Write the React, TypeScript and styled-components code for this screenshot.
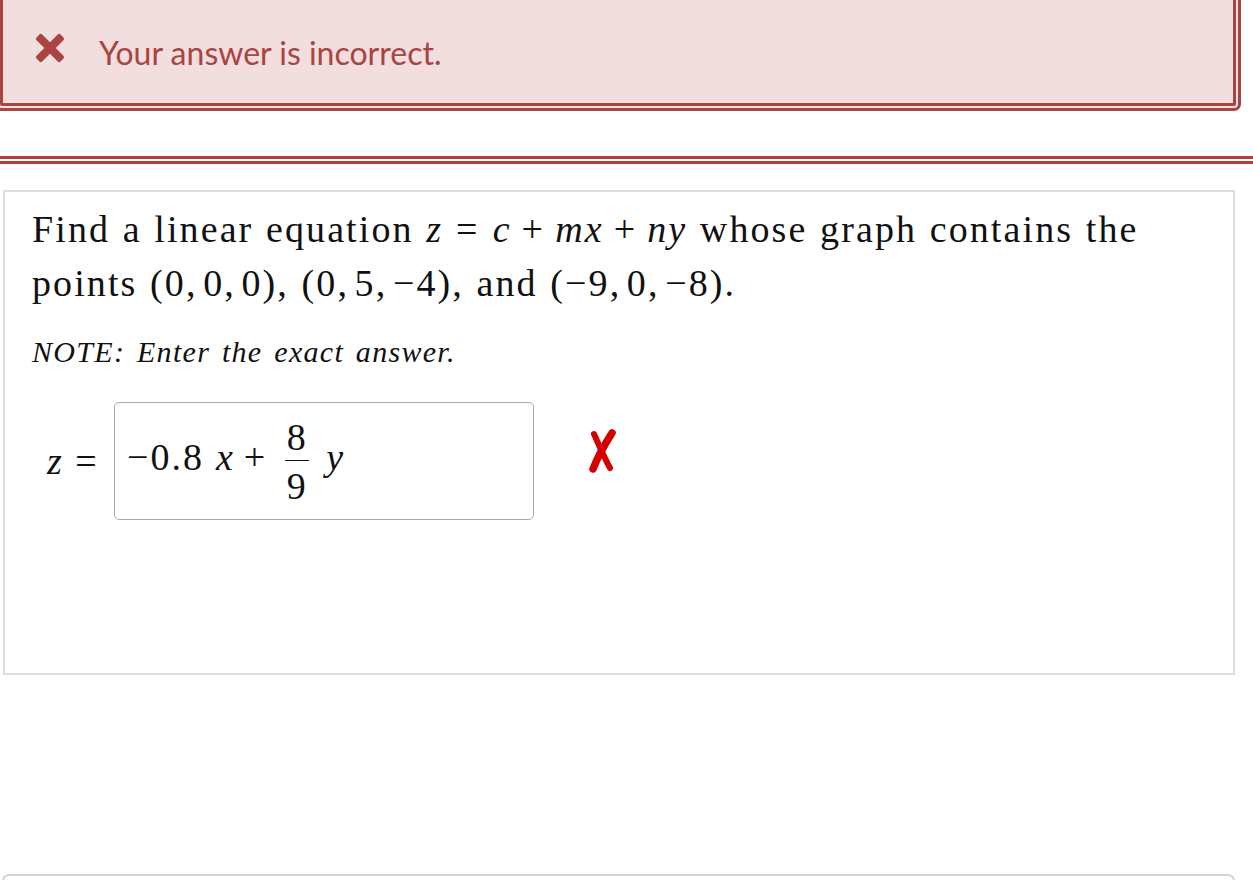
import React from "react";
import styled, { createGlobalStyle } from "styled-components";

const GlobalStyle = createGlobalStyle`
  html, body {
    margin: 0;
    padding: 0;
    background: #fff;
  }
  body {
    overflow: hidden;
  }
`;

const Page = styled.div`
  width: 1253px;
  height: 880px;
  overflow: hidden;
`;

const Alert = styled.div`
  box-sizing: border-box;
  width: 1246px;
  height: 125px;
  margin: -14px 0 0 -5px;
  padding-left: 32px;
  display: flex;
  align-items: center;
  gap: 34px;
  background: #f2dede;
  border: 8px double #a94442;
  border-radius: 7px;
  color: #a94442;
  font-family: Lato, "Open Sans", sans-serif;
  font-size: 32px;
`;

const AlertText = styled.span`
  margin-top: 8px;
`;

const IconSvg = styled.svg`
  flex: none;
  width: 30px;
  height: 30px;
  margin-top: -2px;
`;

const TimesIcon = () => (
  <IconSvg viewBox="0 0 30 30">
    <g fill="currentColor">
      <rect x="-2" y="11" width="34" height="8" rx="2" transform="rotate(45 15 15)" />
      <rect x="-2" y="11" width="34" height="8" rx="2" transform="rotate(-45 15 15)" />
    </g>
  </IconSvg>
);

const Divider = styled.div`
  margin-top: 45px;
  border-top: 8px double #a94442;
`;

const Panel = styled.section`
  box-sizing: border-box;
  width: 1232px;
  height: 485px;
  margin: 26px 0 0 3px;
  padding: 10px 27px 0;
  border: 2px solid #dedede;
  font-family: "Liberation Serif", "Times New Roman", serif;
  color: #111;
`;

const Question = styled.p`
  margin: 0;
  font-size: 38px;
  line-height: 54px;
  letter-spacing: 2.1px;
  word-spacing: 1px;
`;

const Tuple = styled.span`
  word-spacing: -6px;
`;

const Var = styled.i<{ $gap?: number }>`
  font-style: italic;
  margin-left: ${(p) => p.$gap ?? 0}px;
`;

const Op = styled.span<{ $space: number }>`
  padding: 0 ${(p) => p.$space}px;
`;

const Note = styled.p`
  margin: 22px 0 0;
  font-size: 30px;
  font-style: italic;
  line-height: 40px;
  letter-spacing: 1.3px;
  word-spacing: 3px;
`;

const AnswerRow = styled.div`
  display: flex;
  align-items: center;
  margin-top: 30px;
  font-size: 38px;
`;

const Lhs = styled.span`
  width: 82px;
  padding-left: 15px;
  box-sizing: border-box;
  word-spacing: 4px;
`;

const AnswerBox = styled.div`
  box-sizing: border-box;
  width: 420px;
  height: 118px;
  padding: 0 0 0 12px;
  display: flex;
  align-items: center;
  border: 1.5px solid #aaa;
  border-radius: 5px;
`;

const Expr = styled.span`
  white-space: nowrap;
  letter-spacing: 2px;
`;

const Frac = styled.span`
  display: inline-flex;
  flex-direction: column;
  align-items: center;
  margin: 0 17px 0 9px;
  line-height: 30px;
  vertical-align: middle;
`;

const FracBar = styled.span`
  width: 24px;
  border-top: 1.5px solid #111;
  margin: 8px 0 10px;
`;

const MarkSvg = styled.svg`
  flex: none;
  width: 32px;
  height: 44px;
  margin: -20px 0 0 52px;
`;

const WrongMark = () => (
  <MarkSvg viewBox="0 0 32 44">
    <g fill="none" stroke="#d40000" strokeLinecap="round">
      <path d="M8 5 C13 16 18 28 24 39" strokeWidth="6" />
      <path d="M26 4 C19 15 12 27 7 40" strokeWidth="7.5" />
    </g>
  </MarkSvg>
);

const NextPanel = styled.div`
  box-sizing: border-box;
  width: 1233px;
  height: 60px;
  margin: 199px 0 0 2px;
  border: 2px solid #d4d4d4;
  border-radius: 7px;
`;

export default function App() {
  return (
    <Page>
      <GlobalStyle />
      <Alert>
        <TimesIcon />
        <AlertText>Your answer is incorrect.</AlertText>
      </Alert>
      <Divider />
      <Panel>
        <Question>
          Find a linear equation <Var>z</Var>
          <Op $space={13}>=</Op>
          <Var>c</Var>
          <Op $space={10}>+</Op>
          <Var>mx</Var>
          <Op $space={10}>+</Op>
          <Var>ny</Var> whose graph contains the
          <br />
          points <Tuple>(0, 0, 0)</Tuple>, <Tuple>(0, 5, −4)</Tuple>, and{" "}
          <Tuple>(−9, 0, −8)</Tuple>.
        </Question>
        <Note>NOTE: Enter the exact answer.</Note>
        <AnswerRow>
          <Lhs>
            <Var>z</Var> =
          </Lhs>
          <AnswerBox>
            <Expr>
              −0.8
              <Var $gap={12}>x</Var>
              <Op $space={9}>+</Op>
              <Frac>
                <span>8</span>
                <FracBar />
                <span>9</span>
              </Frac>
              <Var>y</Var>
            </Expr>
          </AnswerBox>
          <WrongMark />
        </AnswerRow>
      </Panel>
      <NextPanel />
    </Page>
  );
}
